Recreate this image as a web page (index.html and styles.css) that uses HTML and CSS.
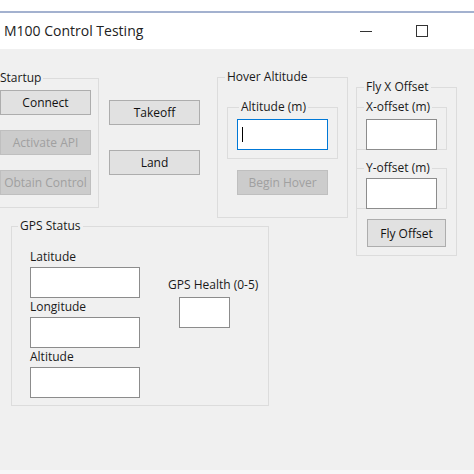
FILE: index.html
```html
<!DOCTYPE html>
<html lang="en">

<head>
  <meta charset="UTF-8">
  <meta name="viewport" content="width=device-width, initial-scale=1.0">
  <title>M100 Control Testing</title>
  <link rel="stylesheet" href="styles.css">
</head>

<body>
  <div class="top-edge"></div>

  <!-- заголовок окна -->
  <div class="titlebar">
    <div class="titlebar__text">M100 Control Testing</div>
    <div class="titlebar__controls">
      <span class="win-btn"><span class="win-btn__min"></span></span>
      <span class="win-btn"><span class="win-btn__max"></span></span>
    </div>
  </div>

  <!-- форма -->
  <div class="client">
    <div class="left-col">
      <div class="top-row">
        <fieldset class="group startup">
          <legend>Startup</legend>
          <div class="stack stack_15">
            <button class="btn">Connect</button>
            <button class="btn" disabled>Activate API</button>
            <button class="btn" disabled>Obtain Control</button>
          </div>
        </fieldset>

        <div class="flight stack stack_25">
          <button class="btn">Takeoff</button>
          <button class="btn">Land</button>
        </div>

        <fieldset class="group hover">
          <legend>Hover Altitude</legend>
          <fieldset class="group alt-group">
            <legend>Altitude (m)</legend>
            <div class="textbox textbox_focused"><span class="caret"></span></div>
          </fieldset>
          <button class="btn btn_hover" disabled>Begin Hover</button>
        </fieldset>
      </div>

      <fieldset class="group gps">
        <legend>GPS Status</legend>
        <div class="gps__body">
          <div class="gps__coords">
            <div class="field-label">Latitude</div>
            <input class="textbox textbox_wide" type="text">
            <div class="field-label">Longitude</div>
            <input class="textbox textbox_wide" type="text">
            <div class="field-label">Altitude</div>
            <input class="textbox textbox_wide" type="text">
          </div>
          <div class="gps__health">
            <div class="field-label field-label_nowrap">GPS Health (0-5)</div>
            <input class="textbox textbox_small" type="text">
          </div>
        </div>
      </fieldset>
    </div>

    <fieldset class="group fly">
      <legend>Fly X Offset</legend>
      <fieldset class="group offset-group offset-group_x">
        <legend>X-offset (m)</legend>
        <input class="textbox textbox_offset" type="text">
      </fieldset>
      <fieldset class="group offset-group offset-group_y">
        <legend>Y-offset (m)</legend>
        <input class="textbox textbox_offset" type="text">
      </fieldset>
      <button class="btn btn_fly">Fly Offset</button>
    </fieldset>
  </div>
  <div class="bottom-edge"></div>
</body>

</html>
```

FILE: styles.css
```css
* {
  box-sizing: border-box
}

body {
  margin: 0;
  background: #fff;
  font-family: "Open Sans", "Noto Sans", sans-serif;
  font-size: 12px;
  color: #1a1a1a;
  overflow: hidden
}

.top-edge {
  height: 13px;
  background: #fff;
  border-bottom: 2px solid #a3b1cf
}

.titlebar {
  display: flex;
  align-items: center;
  height: 36px;
  background: #fff
}

.titlebar__text {
  padding: 0 0 1px 4px;
  font-size: 14px;
  color: #222
}

.titlebar__controls {
  display: flex;
  margin-left: auto;
  padding-right: 24px
}

.win-btn {
  display: flex;
  align-items: center;
  justify-content: center;
  width: 56px;
  height: 36px
}

.win-btn__min {
  width: 12px;
  height: 1px;
  background: #333
}

.win-btn__max {
  width: 12px;
  height: 12px;
  border: 1px solid #333
}

.client {
  display: flex;
  align-items: flex-start;
  height: 421px;
  background: #f0f0f0;
  overflow: hidden
}

.bottom-edge {
  height: 5px;
  background: #f7f7f7
}

.top-row {
  display: flex;
  align-items: flex-start
}

.stack {
  display: flex;
  flex-direction: column
}

.stack_15 {
  gap: 15px
}

.stack_25 {
  gap: 25px
}

/* групбоксы, легенда считается от padding-left */
.group {
  margin: 0;
  padding: 0;
  min-width: 0;
  border: 1px solid #dcdcdc
}

.group legend {
  margin-left: 7px;
  padding: 0 2px;
  line-height: 16px;
  font-size: 12px
}

.startup {
  width: 108px;
  height: 138px;
  margin: 21px 0 0 -9px;
  padding: 4px 0 0 8px
}

.startup legend {
  margin-left: -2px
}

.flight {
  margin: 51px 0 0 10px
}

.hover {
  width: 131px;
  height: 149px;
  margin: 20px 0 0 17px;
  padding-left: 9px
}

.hover>legend {
  margin-left: -2px
}

.alt-group {
  width: 111px;
  height: 60px;
  margin-top: 14px;
  padding: 4px 0 0 9px
}

.alt-group legend {
  margin-left: 2px
}

.fly {
  width: 101px;
  height: 177px;
  margin: 30px 0 0 8px
}

.offset-group {
  width: 91px;
  margin-left: -1px;
  padding-left: 9px
}

.offset-group legend {
  margin-left: -2px
}

.offset-group_x {
  height: 51px;
  margin-top: 4px;
  padding-top: 4px
}

.offset-group_y {
  height: 49px;
  margin-top: 10px;
  padding-top: 2px
}

.gps {
  width: 258px;
  height: 188px;
  margin-left: 11px;
  padding-left: 18px
}

.gps legend {
  margin-left: -12px
}

.gps__body {
  display: flex;
  align-items: flex-start
}

.gps__coords .field-label:first-child {
  margin-top: 14px
}

.gps__coords .textbox {
  margin-top: 2px
}

.gps__health {
  margin: 42px 0 0 28px
}

.gps__health .textbox {
  margin: 4px 0 0 11px
}

.field-label {
  line-height: 17px
}

.field-label_nowrap {
  white-space: nowrap
}

/* кнопки */
.btn {
  display: block;
  width: 91px;
  height: 25px;
  padding: 0;
  font-family: inherit;
  font-size: 12px;
  color: #111;
  background: #e1e1e1;
  border: 1px solid #adadad;
  border-radius: 0
}

.btn:disabled {
  color: #a0a0a0;
  background: #cccccc;
  border-color: #bfbfbf
}

.btn_hover {
  margin: 11px 0 0 10px
}

.btn_fly {
  width: 79px;
  height: 28px;
  margin: 10px 0 0 10px
}

/* текстовые поля */
.textbox {
  display: block;
  height: 31px;
  padding: 0 4px;
  font-family: inherit;
  font-size: 12px;
  background: #fff;
  border: 1px solid #8c8c8c;
  border-radius: 0;
  outline: 0
}

.textbox_focused {
  display: flex;
  align-items: center;
  width: 91px;
  border-color: #0078d7
}

.caret {
  width: 1px;
  height: 15px;
  background: #000
}

.textbox_wide {
  width: 110px
}

.textbox_small {
  width: 51px
}

.textbox_offset {
  width: 71px
}
```
